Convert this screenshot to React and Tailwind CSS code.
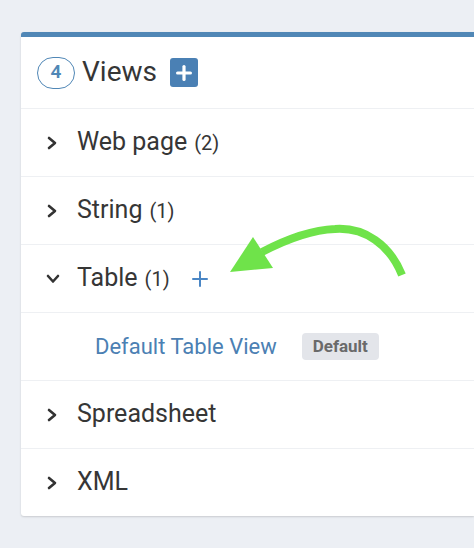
import { Plus } from 'lucide-react';

const rows = [
  { name: 'Web page', count: 2 },
  { name: 'String', count: 1 },
  { name: 'Table', count: 1, open: true },
  { name: 'Spreadsheet' },
  { name: 'XML' },
];

function ChevronRight() {
  return (
    <svg width="12" height="14" viewBox="0 0 12 14" className="shrink-0">
      <path d="M3 2 L9 7 L3 12" fill="none" stroke="#333" strokeWidth="2.6" strokeLinecap="round" strokeLinejoin="round" />
    </svg>
  );
}

function ChevronDown() {
  return (
    <svg width="14" height="12" viewBox="0 0 14 12" className="shrink-0">
      <path d="M2 3 L7 8.5 L12 3" fill="none" stroke="#333" strokeWidth="2.6" strokeLinecap="round" strokeLinejoin="round" />
    </svg>
  );
}

export default function App() {
  return (
    <div
      className="w-[474px] h-[548px] bg-[#eceff4] pl-[21px] pt-[32px] overflow-hidden"
      style={{ fontFamily: 'Roboto, "Noto Sans", sans-serif' }}
    >
      <div className="relative bg-white border-t-[5px] border-[#5087b6] rounded-tl-[3px] rounded-bl-[3px] shadow-[0_1px_2px_rgba(0,0,0,0.15)] text-[#363636]">
        {/* Header */}
        <div className="h-[71px] flex items-center pl-[16px] gap-[7px]">
          <span className="w-[38px] h-[32px] rounded-full border-[1.5px] border-[#5087b6] flex items-center justify-center text-[#5087b6] text-[19px] font-semibold">
            4
          </span>
          <span className="text-[28px] leading-none pb-[2px]">Views</span>
          <span className="ml-[6px] w-[28px] h-[29px] rounded-[3px] bg-[#4a80b4] flex items-center justify-center">
            <Plus className="w-[22px] h-[22px] text-white" strokeWidth={3.5} />
          </span>
        </div>

        {rows.map((row) => (
          <div key={row.name}>
            <div className="h-[68px] border-t border-[#eef0f3] flex items-center pl-[25px]">
              <span className="w-[31px] flex items-center">
                {row.open ? <ChevronDown /> : <ChevronRight />}
              </span>
              <span className="text-[25px] leading-none pb-[3px]">{row.name}</span>
              {row.count && (
                <span className="text-[20px] leading-none ml-[7px]">({row.count})</span>
              )}
              {row.open && (
                <Plus className="ml-[18px] w-[24px] h-[24px] text-[#4a86c5]" strokeWidth={2} />
              )}
            </div>
            {row.open && (
              <div className="h-[68px] border-t border-[#eef0f3] flex items-center pl-[74px]">
                <span className="text-[22px] leading-none text-[#4b80b3]">Default Table View</span>
                <span className="ml-[25px] h-[27px] px-[11px] rounded-[4px] bg-[#e3e5ea] text-[#6a6a6a] text-[17px] font-bold flex items-center">
                  Default
                </span>
              </div>
            )}
          </div>
        ))}

        {/* annotation arrow */}
        <svg className="absolute left-[199px] top-[178px] pointer-events-none" width="200" height="80" viewBox="0 0 200 80">
          <path d="M182 60 C 170 30, 145 12, 115 14 C 90 15, 65 25, 42 37" fill="none" stroke="#6fe34a" strokeWidth="8" strokeLinecap="butt" />
          <polygon points="10,57 33,22 53,53" fill="#6fe34a" />
        </svg>
      </div>
    </div>
  );
}
